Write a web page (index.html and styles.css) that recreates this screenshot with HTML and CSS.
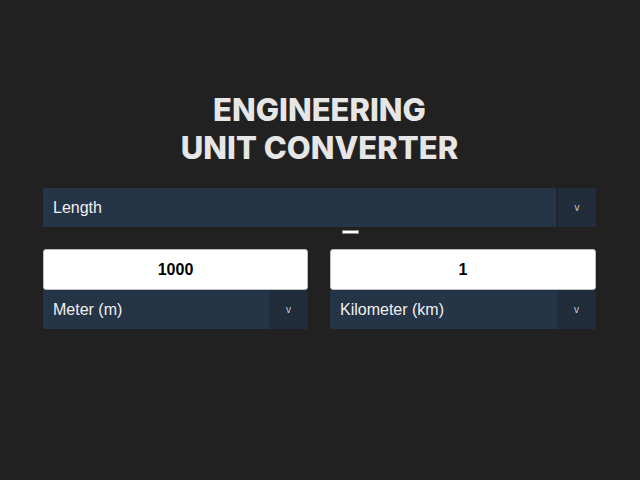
FILE: index.html
```html
<!DOCTYPE html>
<html lang="en">
<head>
    <meta charset="UTF-8">
    <meta name="viewport" content="width=device-width, initial-scale=1.0">
    <title>Engineering Unit Converter</title>
    <link rel="stylesheet" href="styles.css">
</head>
<body>
    <main class="converter">
        <h1 class="title">Engineering<br>Unit Converter</h1>

        <!-- Categoría de unidades -->
        <div class="select select-category">
            <span class="select-value">Length</span>
            <span class="select-arrow">v</span>
        </div>

        <div class="swap-row">
            <span class="swap-btn"></span>
        </div>

        <div class="columns">
            <div class="column">
                <div class="value-input">1000</div>
                <div class="select select-unit">
                    <span class="select-value">Meter (m)</span>
                    <span class="select-arrow">v</span>
                </div>
            </div>
            <div class="column">
                <div class="value-input">1</div>
                <div class="select select-unit">
                    <span class="select-value">Kilometer (km)</span>
                    <span class="select-arrow">v</span>
                </div>
            </div>
        </div>
    </main>
</body>
</html>
```

FILE: styles.css
```css
* {
    margin: 0;
    padding: 0;
    box-sizing: border-box;
}

body {
    font-family: "Liberation Sans", Arial, sans-serif;
    background: #212121;
    color: #e8e8e8;
    min-height: 100vh;
}

.converter {
    width: 553px;
    margin-left: 43px;
    padding-top: 91px;
}

.title {
    font-family: Inter, "Noto Sans", sans-serif;
    font-weight: 800;
    font-size: 31px;
    line-height: 38px;
    text-transform: uppercase;
    text-align: center;
    color: #e6e6e6;
    margin-bottom: 21px;
}

.select {
    display: flex;
    height: 39px;
    background: #263447;
    color: #f0f0f0;
    font-size: 16px;
}

.select-value {
    flex: 1;
    display: flex;
    align-items: center;
    padding-left: 10px;
}

.select-arrow {
    width: 40px;
    display: flex;
    align-items: center;
    justify-content: center;
    font-size: 10px;
    color: #c8ccd2;
    background: #212d3b;
}

.select-category .select-arrow {
    border-left: 2px solid #1e2630;
}

.swap-row {
    height: 22px;
    padding-top: 3px;
    padding-left: 299px;
}

.swap-btn {
    display: block;
    width: 17px;
    height: 4px;
    background: #fff;
    border: 1px solid #8a8a8a;
}

.columns {
    display: grid;
    grid-template-columns: 265px 266px;
    gap: 22px;
}

.value-input {
    height: 41px;
    background: #fff;
    border: 1px solid #bdbdbd;
    border-radius: 3px;
    color: #000;
    font-weight: 700;
    font-size: 16px;
    display: flex;
    align-items: center;
    justify-content: center;
}

.select-unit .select-arrow {
    width: 39px;
}
```
